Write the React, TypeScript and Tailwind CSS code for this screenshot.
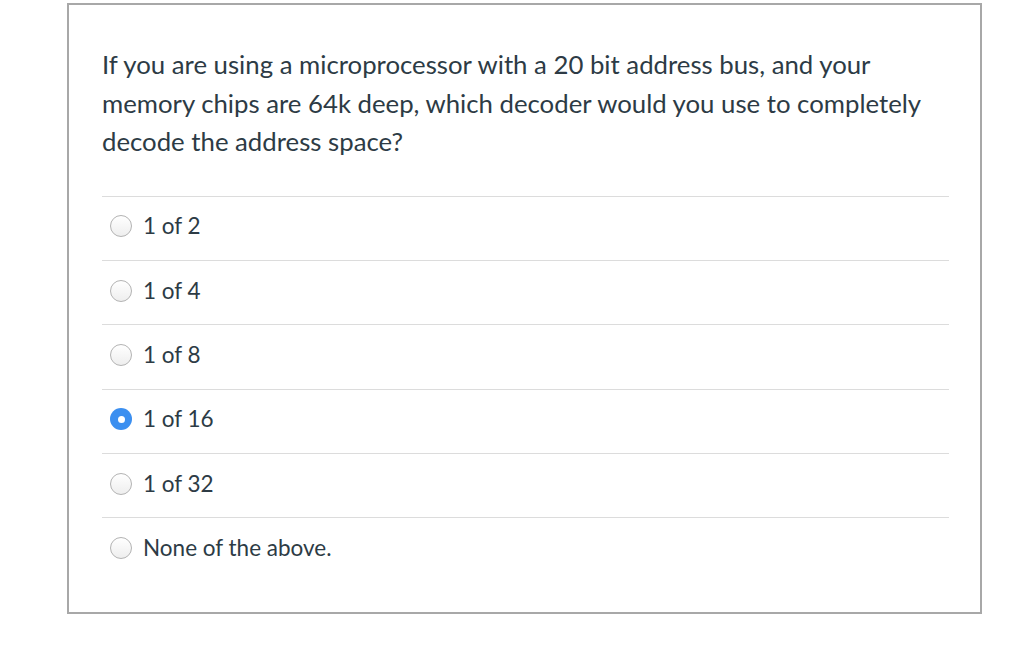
const options = ["1 of 2", "1 of 4", "1 of 8", "1 of 16", "1 of 32", "None of the above."];
const selected = 3;

export default function App() {
  return (
    <div className="w-[1024px] h-[648px] bg-white pt-[3px] pl-[67px]" style={{ fontFamily: "Lato, 'Open Sans', sans-serif" }}>
      <div className="w-[915px] h-[611px] border-2 border-[#a8a8a8] bg-white pl-[33px] pr-[31px] pt-[40px]">
        <p className="text-[25.75px] leading-[38.5px] text-[#2d3b45]">
          If you are using a microprocessor with a 20 bit address bus, and your memory chips are 64k deep, which decoder would you use to completely decode the address space?
        </p>
        <ul className="mt-[35px]">
          {options.map((opt, i) => (
            <li key={opt} className="h-[64.4px] border-t border-[#dcdcdc] flex items-center pb-[4px]">
              {i === selected ? (
                <span className="ml-[8px] w-[22px] h-[22px] rounded-full bg-[#3b8ff0] flex items-center justify-center">
                  <span className="w-[7px] h-[7px] rounded-full bg-white" />
                </span>
              ) : (
                <span className="ml-[8px] w-[22px] h-[22px] rounded-full border border-[#b3b3b3] bg-gradient-to-b from-white to-[#eeeeee]" />
              )}
              <span className="ml-[11px] text-[22.5px] text-[#2d3b45]">{opt}</span>
            </li>
          ))}
        </ul>
      </div>
    </div>
  );
}
